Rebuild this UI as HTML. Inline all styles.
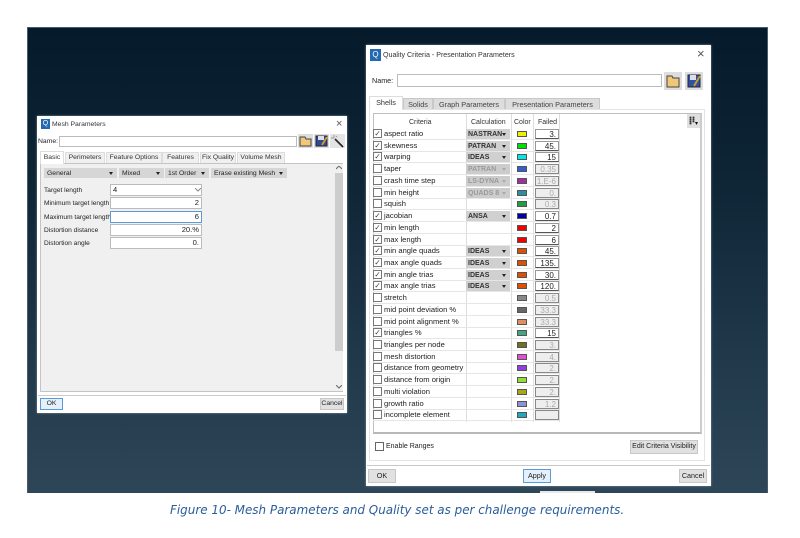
<!DOCTYPE html>
<html><head><meta charset="utf-8"><style>
html,body{margin:0;padding:0;background:#fff;}
#p{position:relative;width:800px;height:538px;overflow:hidden;background:#fff;font-family:"Liberation Sans",sans-serif;color:#222;font-size:6.8px;}
#p div,#p span,#p svg{position:absolute;white-space:nowrap;box-sizing:border-box;}
.ui{left:0;top:0;width:800px;height:538px;filter:blur(.3px);}
.bg{left:27px;top:27px;width:741px;height:466px;background:linear-gradient(#051a2a,#0f2637 35%,#1f384a 70%,#2d4658);border:1px solid #4a5a66;border-bottom:none;}
.dlg{background:#fff;box-shadow:0 0 2px #8a97a2;}
.pan{background:#f0f0f0;border:1px solid #c4c4c4;}
.tab{background:#f0f0f0;border:1px solid #ddd;border-bottom:none;text-align:center;color:#333;line-height:10px;}
.tb{background:#ddd;border:1px solid #c8c8c8;border-bottom:2px solid #c4c4c4;text-align:center;color:#444;line-height:11px;font-size:7.3px;}
.cb{background:#d6d6d6;padding-left:3px;line-height:11px;color:#222;}
.cb:after{content:"";position:absolute;right:4px;top:4px;border:2.5px solid transparent;border-top:3px solid #222;border-bottom:none;}
.fd{background:#fff;border:1px solid #bbb;text-align:right;padding-right:2px;line-height:10px;color:#222;font-size:7.6px;}
.btn{background:#e1e1e1;border:1px solid #c8c8c8;text-align:center;color:#222;line-height:12px;font-size:7.2px;}
.r{left:373px;width:186px;height:12px;border-bottom:1px solid #e6e6e6;line-height:11px;font-size:7.6px;}
.c{left:0;top:1px;width:9px;height:9px;border:1px solid #777;background:#fff;color:#333;font-size:7.5px;line-height:7px;text-align:center;}
.t{left:11px;top:0;}
.k{left:93px;top:1px;width:44px;height:10px;background:#d0d0d0;padding-left:2px;line-height:11px;font-weight:bold;color:#333;font-size:7px;overflow:hidden;}
.k:after{content:"";position:absolute;right:4px;top:4px;border:2.5px solid transparent;border-top:3px solid #222;border-bottom:none;}
.k.o{background:#ccc;color:#999;}.k.o:after{border-top-color:#aaa;}
.s{left:144px;top:3px;width:10px;height:6px;border:1px solid #555;}
.f{left:162px;top:1px;width:24px;height:10px;background:#fff;border:1px solid #999;border-bottom:1px solid #555;text-align:right;padding-right:2px;line-height:9px;font-size:8px;color:#222;}
.f.o{background:#eee;color:#aaa;border-color:#888;}
.ln{background:#ddd;width:1px;}
.h{top:117px;line-height:11px;font-size:7px;color:#333;}
.l{left:44px;line-height:10px;font-size:6.6px;}
</style></head><body><div id="p">
<div class="bg"></div>
<div class="ui">
<!-- Left dialog -->
<div class="dlg" style="left:37px;top:116px;width:310px;height:297px;"></div>
<div style="left:41px;top:119px;width:9px;height:10px;background:#2368b0;color:#fff;font-size:7px;line-height:10px;text-align:center;">Q</div>
<div style="left:52px;top:120px;line-height:10px;color:#333;">Mesh Parameters</div>
<div style="left:336px;top:118px;font-size:11px;line-height:12px;color:#555;">×</div>
<div style="left:38px;top:137px;line-height:10px;">Name:</div>
<div style="left:59px;top:136px;width:238px;height:11px;background:#fff;border:1px solid #bbb;"></div>
<div style="left:298px;top:134px;width:15px;height:14px;background:#ddd;"></div>
<svg style="left:299px;top:135px;" width="13" height="12"><path d="M1 2h5l1 2h5v7H1z" fill="#f0c878" stroke="#444"/></svg>
<div style="left:314px;top:134px;width:15px;height:14px;background:#ddd;"></div>
<svg style="left:315px;top:135px;" width="13" height="12"><path d="M1 1h11v10H1z" fill="#304a90" stroke="#223"/><path d="M3 1h6v4H3z" fill="#dde"/><path d="M7 10l5-8" stroke="#c89a30" stroke-width="2"/></svg>
<div style="left:330px;top:134px;width:15px;height:14px;background:#e4e4e4;"></div>
<svg style="left:331px;top:135px;" width="13" height="13"><path d="M4 4l8 8" stroke="#222" stroke-width="1.6"/><path d="M3 0v3M0 3h3M5 2l1-1" stroke="#999"/></svg>
<div class="tab" style="left:40px;top:151px;width:24px;height:13px;background:#fff;line-height:11px;z-index:2;">Basic</div>
<div class="tab" style="left:65px;top:152px;width:40px;height:11px;">Perimeters</div>
<div class="tab" style="left:106px;top:152px;width:56px;height:11px;">Feature Options</div>
<div class="tab" style="left:162px;top:152px;width:37px;height:11px;">Features</div>
<div class="tab" style="left:200px;top:152px;width:36px;height:11px;">Fix Quality</div>
<div class="tab" style="left:237px;top:152px;width:48px;height:11px;">Volume Mesh</div>
<div class="pan" style="left:40px;top:163px;width:303px;height:229px;"></div>
<div class="cb" style="left:44px;top:168px;width:73px;height:10px;">General</div>
<div class="cb" style="left:119px;top:168px;width:45px;height:10px;">Mixed</div>
<div class="cb" style="left:165px;top:168px;width:44px;height:10px;">1st Order</div>
<div class="cb" style="left:211px;top:168px;width:76px;height:10px;">Erase existing Mesh</div>
<div class="l" style="top:186px;">Target length</div>
<div class="l" style="top:199px;">Minimum target length</div>
<div class="l" style="top:213px;">Maximum target length</div>
<div class="l" style="top:226px;">Distortion distance</div>
<div class="l" style="top:239px;">Distortion angle</div>
<div class="fd" style="left:110px;top:184px;width:92px;height:12px;text-align:left;padding-left:2px;">4</div>
<svg style="left:195px;top:188px;" width="6" height="4"><path d="M0 0l3 3 3-3" fill="none" stroke="#888"/></svg>
<div class="fd" style="left:110px;top:197px;width:92px;height:12px;">2</div>
<div class="fd" style="left:110px;top:211px;width:92px;height:12px;border-color:#5a9ad8;">6</div>
<div class="fd" style="left:110px;top:224px;width:92px;height:12px;">20.%</div>
<div class="fd" style="left:110px;top:237px;width:92px;height:12px;">0.</div>
<div style="left:335px;top:164px;width:8px;height:227px;background:#f0f0f0;"></div>
<div style="left:335px;top:173px;width:8px;height:178px;background:#cdcdcd;"></div>
<svg style="left:336px;top:166px;" width="6" height="4"><path d="M0 3l3-3 3 3" fill="none" stroke="#666"/></svg>
<svg style="left:336px;top:385px;" width="6" height="4"><path d="M0 0l3 3 3-3" fill="none" stroke="#666"/></svg>
<div style="left:38px;top:395px;width:308px;height:1px;background:#ccc;"></div>
<div class="btn" style="left:40px;top:398px;width:23px;height:12px;background:#e4f0fb;border-color:#5a9ad8;line-height:10px;font-size:6.8px;">OK</div>
<div class="btn" style="left:320px;top:398px;width:24px;height:12px;line-height:10px;font-size:6.8px;">Cancel</div>

<!-- Right dialog -->
<div class="dlg" style="left:366px;top:45px;width:345px;height:441px;"></div>
<div style="left:370px;top:49px;width:11px;height:12px;background:#2368b0;color:#fff;font-size:8px;line-height:12px;text-align:center;">Q</div>
<div style="left:383px;top:50px;line-height:10px;font-size:7.1px;color:#333;">Quality Criteria - Presentation Parameters</div>
<div style="left:697px;top:47px;font-size:13px;line-height:14px;color:#555;">×</div>
<div style="left:372px;top:75px;line-height:11px;font-size:7.2px;">Name:</div>
<div style="left:397px;top:74px;width:265px;height:13px;background:#fff;border:1px solid #bbb;"></div>
<div style="left:664px;top:72px;width:18px;height:18px;background:#ddd;"></div>
<svg style="left:666px;top:74px;" width="14" height="14"><path d="M1 2h5l1 2h6v9H1z" fill="#f0c878" stroke="#444"/></svg>
<div style="left:685px;top:72px;width:18px;height:18px;background:#ddd;"></div>
<svg style="left:687px;top:74px;" width="14" height="14"><path d="M1 1h12v12H1z" fill="#3050a0" stroke="#223"/><path d="M3 1h6v5H3z" fill="#dde"/><path d="M7 12l6-10" stroke="#c89a30" stroke-width="2"/></svg>
<div class="tab" style="left:369px;top:96px;width:34px;height:14px;background:#fff;line-height:12px;z-index:2;font-size:7.3px;">Shells</div>
<div class="tb" style="left:403px;top:98px;width:30px;height:13px;">Solids</div>
<div class="tb" style="left:433px;top:98px;width:72px;height:13px;">Graph Parameters</div>
<div class="tb" style="left:505px;top:98px;width:95px;height:13px;">Presentation Parameters</div>
<div style="left:369px;top:109px;width:336px;height:352px;background:#fff;border:1px solid #e4e4e4;"></div>
<div style="left:373px;top:113px;width:329px;height:321px;background:#fff;border:1px solid #c0c0c0;border-bottom:2px solid #b8b8b8;border-right:2px solid #ccc;"></div>
<div class="h" style="left:409px;">Criteria</div>
<div class="h" style="left:471px;">Calculation</div>
<div class="h" style="left:514px;">Color</div>
<div class="h" style="left:538px;">Failed</div>
<div class="ln" style="left:466px;top:114px;height:308px;"></div>
<div class="ln" style="left:511px;top:114px;height:308px;"></div>
<div class="ln" style="left:533px;top:114px;height:308px;"></div>
<div class="ln" style="left:559px;top:114px;height:308px;"></div>
<div style="left:687px;top:114px;width:13px;height:14px;background:#e0e0e0;"></div>
<svg style="left:689px;top:116px;" width="10" height="10"><path d="M1 1h1v1H1zM4 1h1v1H4zM1 3h1v1H1zM4 3h1v1H4zM1 5h1v1H1zM4 5h1v1H4zM1 7h1v1H1z" stroke="#333" stroke-width=".8"/><path d="M6 6h3l-1.500 3z" fill="#111"/></svg>

<div class="r" style="top:128px;"><div class="c">✓</div><div class="t">aspect ratio</div><div class="k">NASTRAN</div><div class="s" style="background:#f0f000;"></div><div class="f">3.</div></div>
<div class="r" style="top:139.700px;"><div class="c">✓</div><div class="t">skewness</div><div class="k">PATRAN</div><div class="s" style="background:#00e000;"></div><div class="f">45.</div></div>
<div class="r" style="top:151.400px;"><div class="c">✓</div><div class="t">warping</div><div class="k">IDEAS</div><div class="s" style="background:#00e8e8;"></div><div class="f">15</div></div>
<div class="r" style="top:163.200px;"><div class="c"></div><div class="t">taper</div><div class="k o">PATRAN</div><div class="s" style="background:#3060d0;"></div><div class="f o">0.35</div></div>
<div class="r" style="top:174.900px;"><div class="c"></div><div class="t">crash time step</div><div class="k o">LS-DYNA</div><div class="s" style="background:#a030a0;"></div><div class="f o">1.E-6</div></div>
<div class="r" style="top:186.600px;"><div class="c"></div><div class="t">min height</div><div class="k o">QUADS 8</div><div class="s" style="background:#2a90a0;"></div><div class="f o">0.</div></div>
<div class="r" style="top:198.300px;"><div class="c"></div><div class="t">squish</div><div class="s" style="background:#20a040;"></div><div class="f o">0.3</div></div>
<div class="r" style="top:210px;"><div class="c">✓</div><div class="t">jacobian</div><div class="k">ANSA</div><div class="s" style="background:#0000a0;"></div><div class="f">0.7</div></div>
<div class="r" style="top:221.800px;"><div class="c">✓</div><div class="t">min length</div><div class="s" style="background:#f00000;"></div><div class="f">2</div></div>
<div class="r" style="top:233.500px;"><div class="c">✓</div><div class="t">max length</div><div class="s" style="background:#f00000;"></div><div class="f">6</div></div>
<div class="r" style="top:245.200px;"><div class="c">✓</div><div class="t">min angle quads</div><div class="k">IDEAS</div><div class="s" style="background:#e05000;"></div><div class="f">45.</div></div>
<div class="r" style="top:256.900px;"><div class="c">✓</div><div class="t">max angle quads</div><div class="k">IDEAS</div><div class="s" style="background:#e05000;"></div><div class="f">135.</div></div>
<div class="r" style="top:268.600px;"><div class="c">✓</div><div class="t">min angle trias</div><div class="k">IDEAS</div><div class="s" style="background:#e05000;"></div><div class="f">30.</div></div>
<div class="r" style="top:280.400px;"><div class="c">✓</div><div class="t">max angle trias</div><div class="k">IDEAS</div><div class="s" style="background:#e05000;"></div><div class="f">120.</div></div>
<div class="r" style="top:292.100px;"><div class="c"></div><div class="t">stretch</div><div class="s" style="background:#888;"></div><div class="f o">0.5</div></div>
<div class="r" style="top:303.800px;"><div class="c"></div><div class="t">mid point deviation %</div><div class="s" style="background:#666;"></div><div class="f o">33.3</div></div>
<div class="r" style="top:315.500px;"><div class="c"></div><div class="t">mid point alignment %</div><div class="s" style="background:#e09060;"></div><div class="f o">33.3</div></div>
<div class="r" style="top:327.200px;"><div class="c">✓</div><div class="t">triangles %</div><div class="s" style="background:#40a880;"></div><div class="f">15</div></div>
<div class="r" style="top:339px;"><div class="c"></div><div class="t">triangles per node</div><div class="s" style="background:#707020;"></div><div class="f o">3.</div></div>
<div class="r" style="top:350.700px;"><div class="c"></div><div class="t">mesh distortion</div><div class="s" style="background:#e050d0;"></div><div class="f o">4.</div></div>
<div class="r" style="top:362.400px;"><div class="c"></div><div class="t">distance from geometry</div><div class="s" style="background:#9040e0;"></div><div class="f o">2.</div></div>
<div class="r" style="top:374.100px;"><div class="c"></div><div class="t">distance from origin</div><div class="s" style="background:#90e030;"></div><div class="f o">2.</div></div>
<div class="r" style="top:385.800px;"><div class="c"></div><div class="t">multi violation</div><div class="s" style="background:#a8a810;"></div><div class="f o">2.</div></div>
<div class="r" style="top:397.600px;"><div class="c"></div><div class="t">growth ratio</div><div class="s" style="background:#9090d8;"></div><div class="f o">1.2</div></div>
<div class="r" style="top:409.300px;"><div class="c"></div><div class="t">incomplete element</div><div class="s" style="background:#20a8c0;"></div><div class="f o"></div></div>

<div style="left:375px;top:442px;width:9px;height:9px;border:1px solid #666;background:#fff;"></div>
<div style="left:386px;top:441px;line-height:12px;font-size:7px;">Enable Ranges</div>
<div class="btn" style="left:630px;top:440px;width:68px;height:14px;font-size:7px;">Edit Criteria Visibility</div>
<div style="left:367px;top:465px;width:343px;height:1px;background:#c8c8c8;"></div>
<div class="btn" style="left:368px;top:469px;width:28px;height:14px;">OK</div>
<div class="btn" style="left:523px;top:469px;width:28px;height:14px;background:#e4f0fb;border-color:#5a9ad8;">Apply</div>
<div class="btn" style="left:679px;top:469px;width:28px;height:14px;">Cancel</div>
</div>
<div style="left:540px;top:491px;width:55px;height:2px;background:#e8e8e8;"></div>
<div style="left:170px;top:501.500px;line-height:16px;font-family:'DejaVu Sans',sans-serif;font-style:italic;font-size:11.950px;color:#2a5d9c;">Figure 10- Mesh Parameters and Quality set as per challenge requirements.</div>
</div></body></html>
